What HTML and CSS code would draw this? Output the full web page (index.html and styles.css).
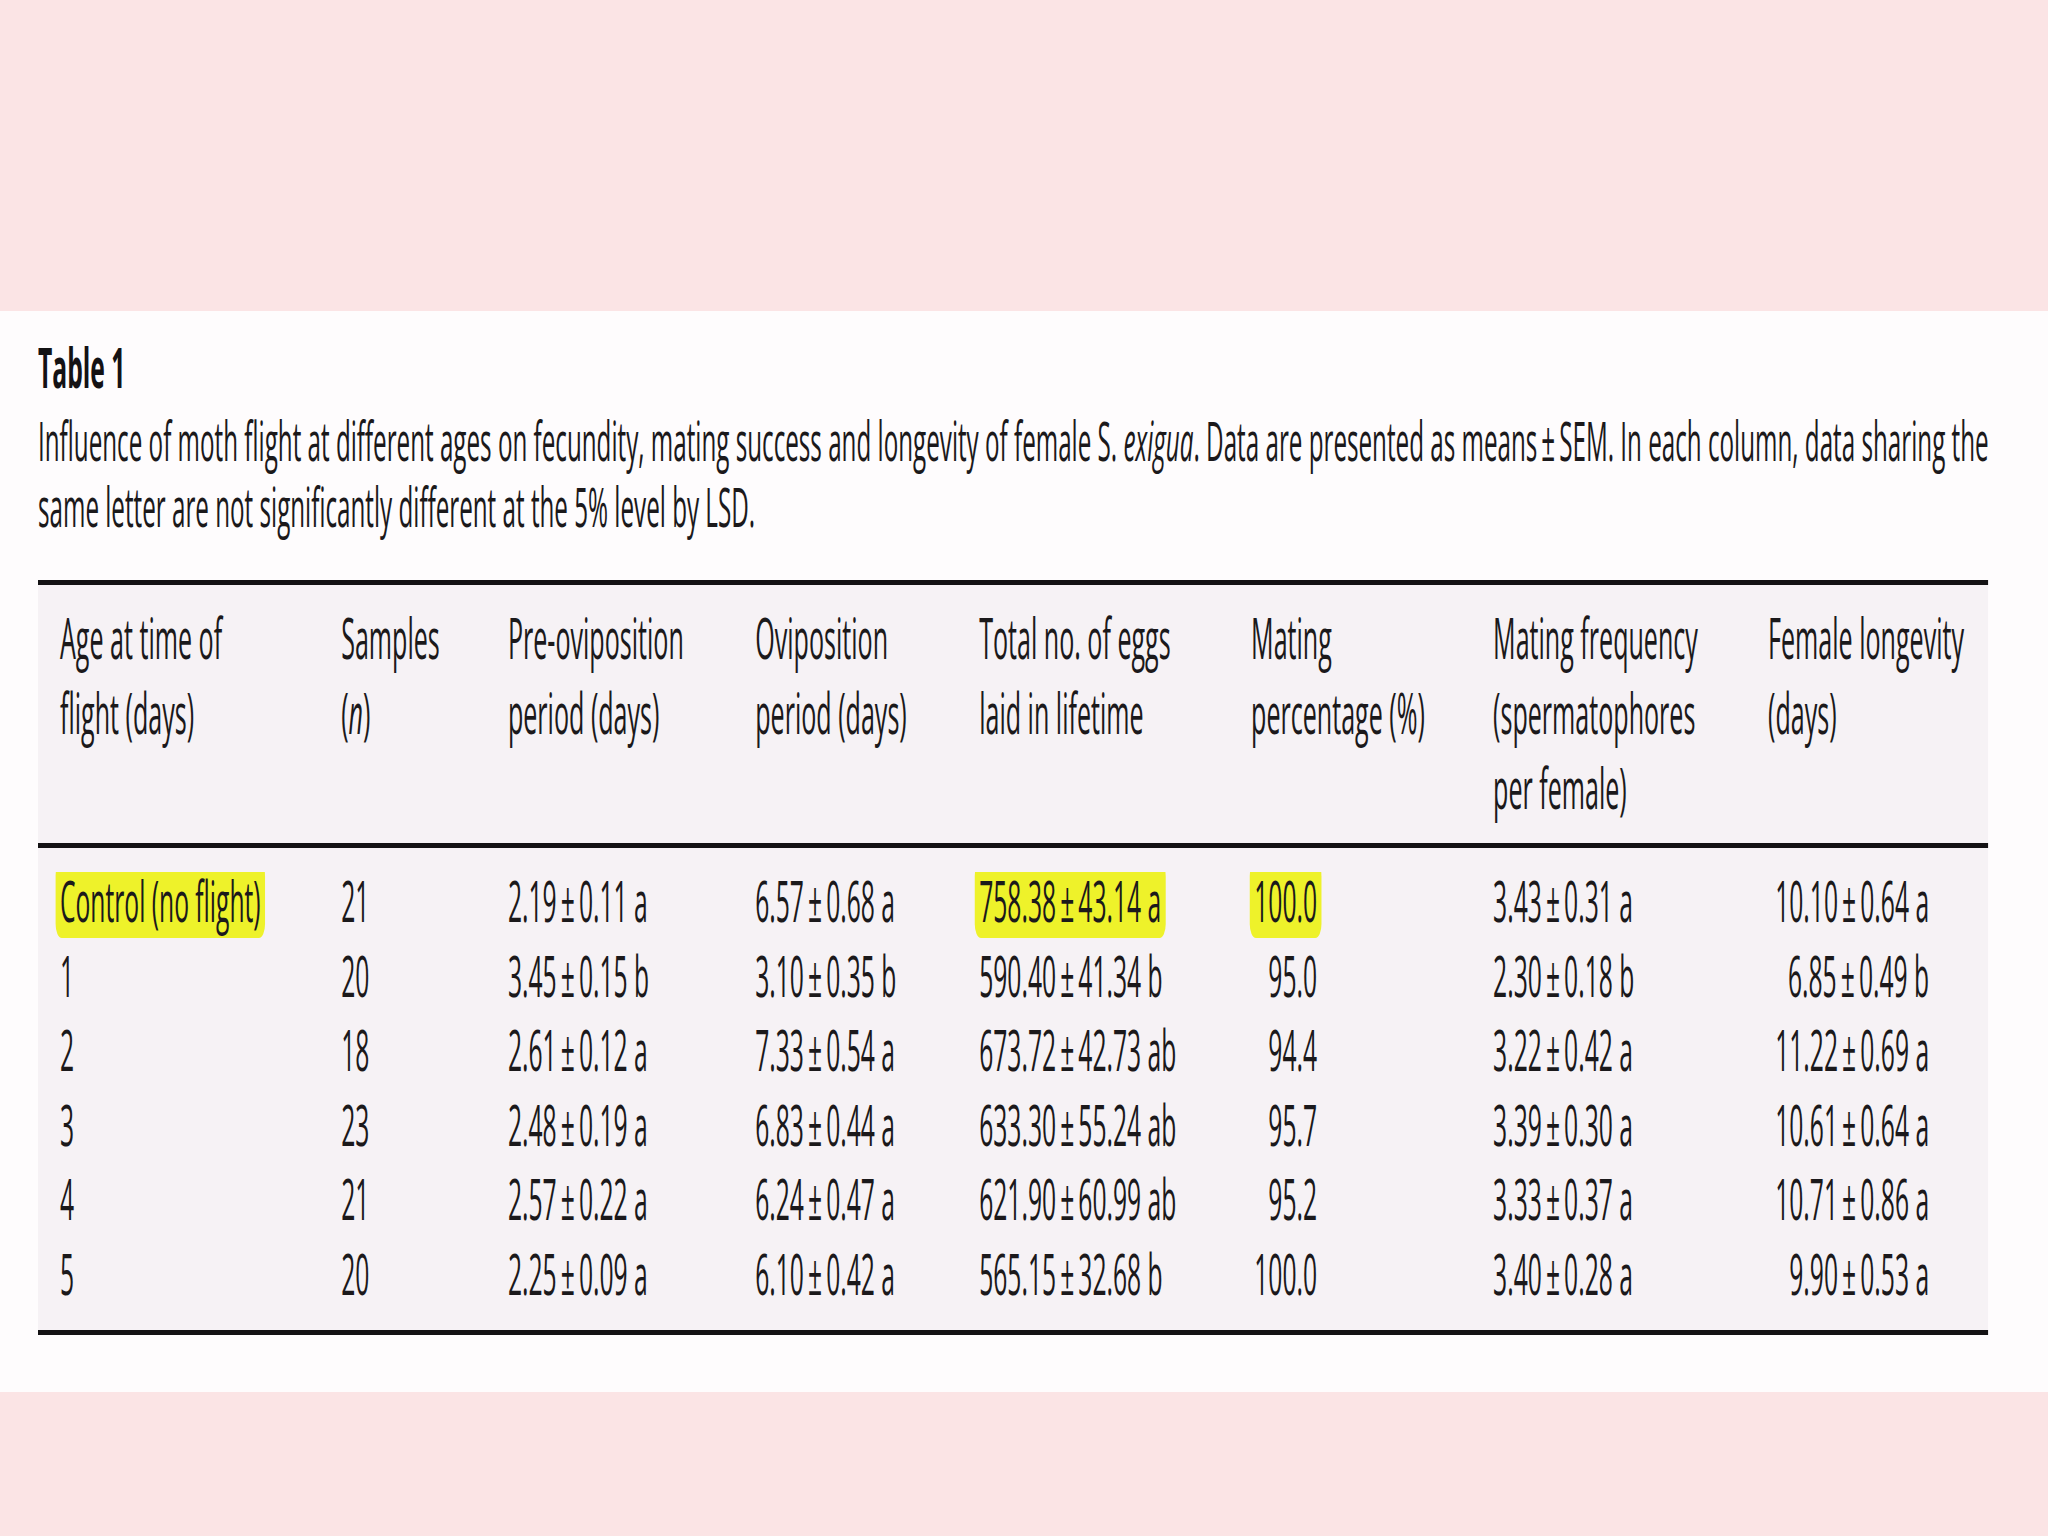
FILE: index.html
```html
<!DOCTYPE html>
<html lang="en">
<head>
<meta charset="utf-8">
<title>Table 1</title>
<link rel="stylesheet" href="styles.css">
</head>
<body>
<div class="page">
  <section class="panel">
    <div class="squash">
      <h1 class="title">Table 1</h1>
      <p class="caption">Influence of moth flight at different ages on fecundity, mating success and longevity of female S. <i>exigua</i>. Data are presented as means&#8201;±&#8201;SEM. In each column, data sharing the same letter are not significantly different at the 5% level by LSD.</p>
      <div class="tbl">
        <div class="row head">
          <div>Age at time of<br>flight (days)</div>
          <div>Samples<br>(<i>n</i>)</div>
          <div>Pre-oviposition<br>period (days)</div>
          <div>Oviposition<br>period (days)</div>
          <div>Total no. of eggs<br>laid in lifetime</div>
          <div>Mating<br>percentage (%)</div>
          <div>Mating frequency<br>(spermatophores<br>per female)</div>
          <div>Female longevity<br>(days)</div>
        </div>
        <div class="body">
          <div class="row">
            <div><span class="hl">Control (no flight)</span></div>
            <div>21</div>
            <div>2.19&#8201;±&#8201;0.11 a</div>
            <div>6.57&#8201;±&#8201;0.68 a</div>
            <div><span class="hl">758.38&#8201;±&#8201;43.14 a</span></div>
            <div class="pct"><span class="hl">100.0</span></div>
            <div>3.43&#8201;±&#8201;0.31 a</div>
            <div class="lon">10.10&#8201;±&#8201;0.64 a</div>
          </div>
          <div class="row">
            <div>1</div>
            <div>20</div>
            <div>3.45&#8201;±&#8201;0.15 b</div>
            <div>3.10&#8201;±&#8201;0.35 b</div>
            <div>590.40&#8201;±&#8201;41.34 b</div>
            <div class="pct">95.0</div>
            <div>2.30&#8201;±&#8201;0.18 b</div>
            <div class="lon">6.85&#8201;±&#8201;0.49 b</div>
          </div>
          <div class="row">
            <div>2</div>
            <div>18</div>
            <div>2.61&#8201;±&#8201;0.12 a</div>
            <div>7.33&#8201;±&#8201;0.54 a</div>
            <div>673.72&#8201;±&#8201;42.73 ab</div>
            <div class="pct">94.4</div>
            <div>3.22&#8201;±&#8201;0.42 a</div>
            <div class="lon">11.22&#8201;±&#8201;0.69 a</div>
          </div>
          <div class="row">
            <div>3</div>
            <div>23</div>
            <div>2.48&#8201;±&#8201;0.19 a</div>
            <div>6.83&#8201;±&#8201;0.44 a</div>
            <div>633.30&#8201;±&#8201;55.24 ab</div>
            <div class="pct">95.7</div>
            <div>3.39&#8201;±&#8201;0.30 a</div>
            <div class="lon">10.61&#8201;±&#8201;0.64 a</div>
          </div>
          <div class="row">
            <div>4</div>
            <div>21</div>
            <div>2.57&#8201;±&#8201;0.22 a</div>
            <div>6.24&#8201;±&#8201;0.47 a</div>
            <div>621.90&#8201;±&#8201;60.99 ab</div>
            <div class="pct">95.2</div>
            <div>3.33&#8201;±&#8201;0.37 a</div>
            <div class="lon">10.71&#8201;±&#8201;0.86 a</div>
          </div>
          <div class="row">
            <div>5</div>
            <div>20</div>
            <div>2.25&#8201;±&#8201;0.09 a</div>
            <div>6.10&#8201;±&#8201;0.42 a</div>
            <div>565.15&#8201;±&#8201;32.68 b</div>
            <div class="pct">100.0</div>
            <div>3.40&#8201;±&#8201;0.28 a</div>
            <div class="lon">9.90&#8201;±&#8201;0.53 a</div>
          </div>
        </div>
      </div>
    </div>
  </section>
</div>
</body>
</html>
```

FILE: styles.css
```css
html, body {
  margin: 0;
  padding: 0;
}

body {
  background: #fbe4e5;
  font-family: "Open Sans", "Noto Sans", "Liberation Sans", sans-serif;
  font-weight: 500;
  color: #1b191b;
}

.page {
  width: 2048px;
  height: 1536px;
  padding-top: 311px;
  box-sizing: border-box;
}

.panel {
  height: 1081px;
  background: #fefcfd;
  overflow: hidden;
}

/* the whole sheet is drawn in a tall, narrow face: lay it out wide, then squeeze */
.squash {
  width: 4432px;
  margin-left: 38px;
  padding-top: 18px;
  transform: scaleX(0.44);
  transform-origin: 0 0;
}

.title {
  margin: 0;
  font-size: 56px;
  line-height: 74px;
  font-weight: 700;
  color: #141214;
}

.caption {
  margin: 4px -50px 0 0;
  font-size: 55px;
  line-height: 66px;
}

.tbl {
  margin-top: 41px;
  background: #f6f2f5;
  border-top: 5px solid #141214;
  border-bottom: 5px solid #141214;
}

.row {
  display: grid;
  grid-template-columns: 639px 379px 562px 509px 618px 550px 625px 1fr;
  padding-left: 50px;
}

.head {
  padding: 15px 0 18px 50px;
  font-size: 57px;
  line-height: 75px;
  border-bottom: 5px solid #141214;
}

.body {
  padding: 15px 0 20px;
  font-size: 56px;
  line-height: 74.5px;
}

.pct {
  text-align: right;
  padding-right: 400px;
}

.lon {
  text-align: right;
  padding-right: 134px;
}

.hl {
  padding: 0 10px;
  margin: 0 -10px;
  border-radius: 14px;
  background: linear-gradient(transparent 10px, #eef22a 10px);
}
```
